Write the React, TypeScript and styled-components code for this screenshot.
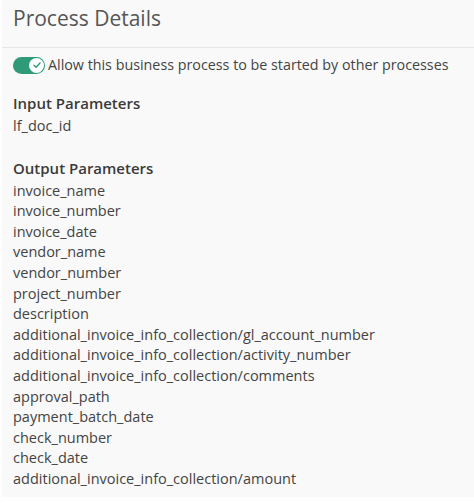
import React from 'react'
import styled, { createGlobalStyle } from 'styled-components'

const GlobalStyle = createGlobalStyle`
  html, body {
    margin: 0;
    padding: 0;
    background: #ffffff;
  }
  body {
    font-family: 'Open Sans', 'Noto Sans', sans-serif;
  }
`

const outputParams = [
  'invoice_name',
  'invoice_number',
  'invoice_date',
  'vendor_name',
  'vendor_number',
  'project_number',
  'description',
  'additional_invoice_info_collection/gl_account_number',
  'additional_invoice_info_collection/activity_number',
  'additional_invoice_info_collection/comments',
  'approval_path',
  'payment_batch_date',
  'check_number',
  'check_date',
  'additional_invoice_info_collection/amount',
]

const Toggle = ({ checked }: { checked: boolean }) => (
  <Track $checked={checked}>
    <Knob>
      <svg width='12' height='12' viewBox='0 0 12 12'>
        <path d='M3 6.2 L5.1 8.3 L9 4' fill='none' stroke='#2f9a77' strokeWidth='1.4' strokeLinecap='round' strokeLinejoin='round' />
      </svg>
    </Knob>
  </Track>
)

const App = () => {
  return (
    <>
      <GlobalStyle />
      <Panel>
        <Header>
          <Title>Process Details</Title>
        </Header>
        <Body>
          <ToggleRow>
            <Toggle checked />
            <ToggleLabel>Allow this business process to be started by other processes</ToggleLabel>
          </ToggleRow>
          <Section>
            <SectionTitle>Input Parameters</SectionTitle>
            <ParamList>
              <Param>lf_doc_id</Param>
            </ParamList>
          </Section>
          <Section $gap={18}>
            <SectionTitle>Output Parameters</SectionTitle>
            <ParamList>
              {outputParams.map((p) => (
                <Param key={p}>{p}</Param>
              ))}
            </ParamList>
          </Section>
        </Body>
      </Panel>
    </>
  )
}
export default App

const Panel = styled.div`
  margin-left: 2px;
  height: 497px;
  background: #f9f9f9;
  color: #444;
`

const Header = styled.div`
  height: 47px;
  padding: 0 11px;
  border-bottom: 1px solid #e6e6e6;
  display: flex;
  align-items: flex-start;
`

const Title = styled.h2`
  margin: 3px 0 0;
  font-size: 21px;
  font-weight: 400;
  line-height: 30px;
  color: #555;
`

const Body = styled.div`
  padding: 8px 11px 0;
  display: flex;
  flex-direction: column;
`

const ToggleRow = styled.div`
  display: flex;
  align-items: center;
  gap: 0 3px;
  height: 18px;
`

const Track = styled.span<{ $checked: boolean }>`
  flex: none;
  width: 32px;
  height: 17px;
  border-radius: 9px;
  background: ${(p) => (p.$checked ? '#2f9a77' : '#bbb')};
  display: flex;
  align-items: center;
  justify-content: ${(p) => (p.$checked ? 'flex-end' : 'flex-start')};
  padding: 0 1px;
  box-sizing: border-box;
`

const Knob = styled.span`
  width: 15px;
  height: 15px;
  border-radius: 50%;
  background: #fff;
  display: flex;
  align-items: center;
  justify-content: center;
`

const ToggleLabel = styled.span`
  font-size: 14.3px;
  line-height: 18px;
  white-space: nowrap;
  color: #444;
`

const Section = styled.div<{ $gap?: number }>`
  margin-top: ${(p) => p.$gap ?? 16}px;
  display: flex;
  flex-direction: column;
`

const SectionTitle = styled.div`
  font-size: 15px;
  font-weight: 600;
  line-height: 26px;
  color: #3a3a3a;
`

const ParamList = styled.div`
  display: flex;
  flex-direction: column;
`

const Param = styled.div`
  font-size: 14.5px;
  line-height: 20.6px;
  color: #444;
`
